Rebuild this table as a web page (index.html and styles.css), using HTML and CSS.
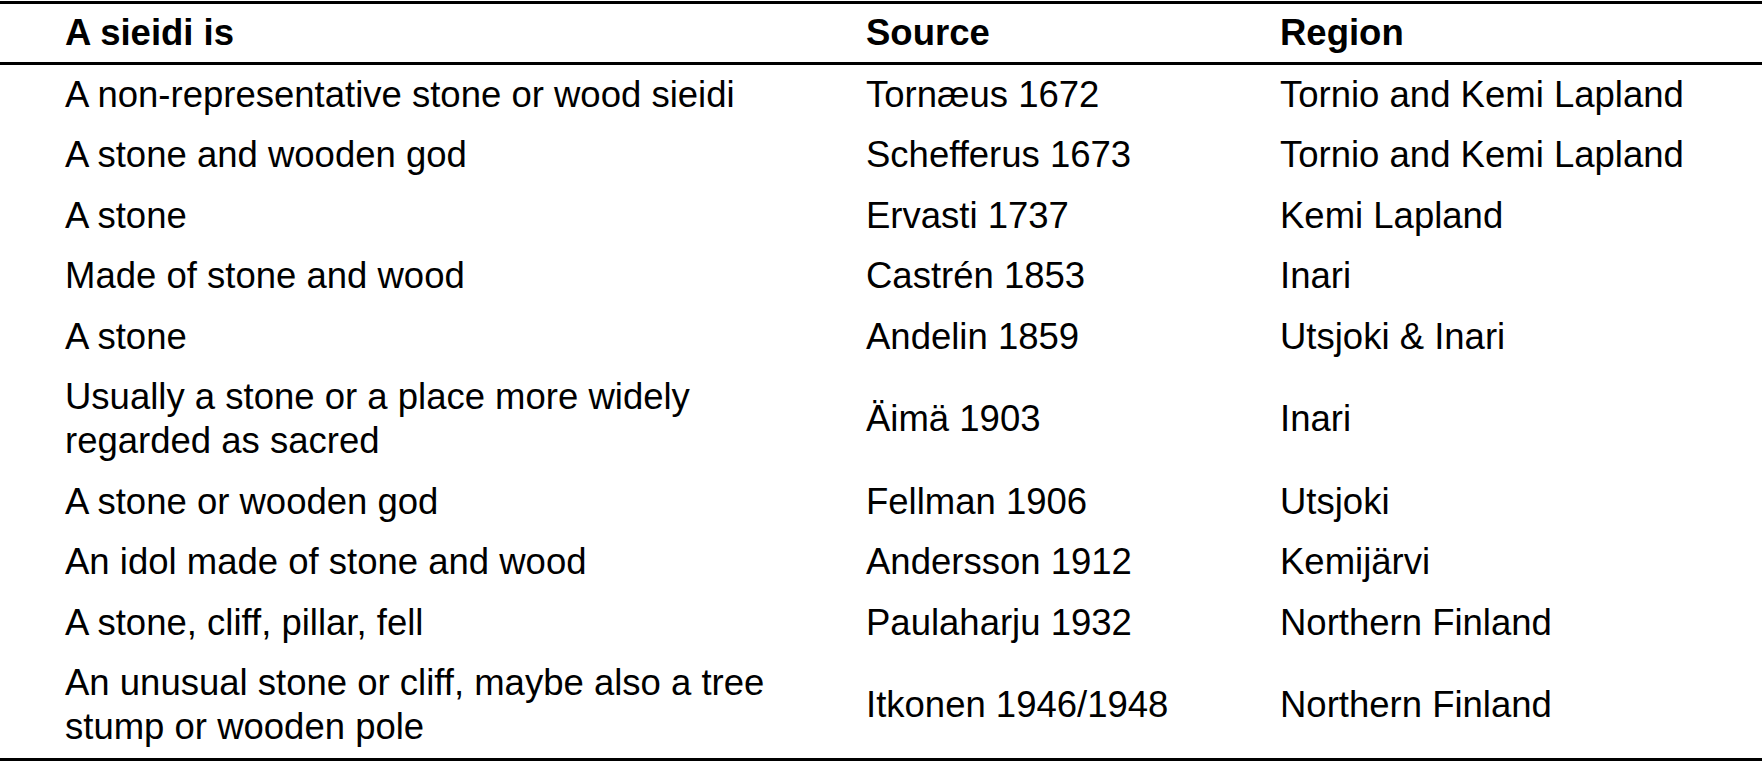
FILE: index.html
```html
<!DOCTYPE html>
<html lang="en">
<head>
<meta charset="utf-8">
<title>Sieidi definitions</title>
<link rel="stylesheet" href="styles.css">
</head>
<body>
<div class="page">
<table class="sieidi">
  <colgroup>
    <col class="c1">
    <col class="c2">
    <col class="c3">
  </colgroup>
  <thead>
    <tr><th>A sieidi is</th><th>Source</th><th>Region</th></tr>
  </thead>
  <tbody>
    <tr><td>A non-representative stone or wood sieidi</td><td>Tornæus 1672</td><td>Tornio and Kemi Lapland</td></tr>
    <tr><td>A stone and wooden god</td><td>Schefferus 1673</td><td>Tornio and Kemi Lapland</td></tr>
    <tr><td>A stone</td><td>Ervasti 1737</td><td>Kemi Lapland</td></tr>
    <tr><td>Made of stone and wood</td><td>Castrén 1853</td><td>Inari</td></tr>
    <tr><td>A stone</td><td>Andelin 1859</td><td>Utsjoki &amp; Inari</td></tr>
    <tr><td>Usually a stone or a place more widely regarded as sacred</td><td>Äimä 1903</td><td>Inari</td></tr>
    <tr><td>A stone or wooden god</td><td>Fellman 1906</td><td>Utsjoki</td></tr>
    <tr><td>An idol made of stone and wood</td><td>Andersson 1912</td><td>Kemijärvi</td></tr>
    <tr><td>A stone, cliff, pillar, fell</td><td>Paulaharju 1932</td><td>Northern Finland</td></tr>
    <tr><td>An unusual stone or cliff, maybe also a tree stump or wooden pole</td><td>Itkonen 1946/1948</td><td>Northern Finland</td></tr>
  </tbody>
</table>
</div>
</body>
</html>
```

FILE: styles.css
```css
html, body {
  margin: 0;
  padding: 0;
  background: #ffffff;
}

.page {
  padding-top: 1px;
}

.sieidi {
  width: 100%;
  border-collapse: collapse;
  table-layout: fixed;
  font-family: "Liberation Sans", Arial, sans-serif;
  font-size: 36.5px;
  line-height: 44px;
  color: #000000;
  border-top: 3px solid #000000;
  border-bottom: 3px solid #000000;
}

.c1 { width: 866px; }
.c2 { width: 414px; }

.sieidi th,
.sieidi td {
  text-align: left;
  vertical-align: middle;
  padding: 7.8px 0 8.7px 0;
}

.sieidi th {
  font-weight: bold;
  padding-top: 7.3px;
  padding-bottom: 6.7px;
  border-bottom: 3px solid #000000;
}

.sieidi th:first-child,
.sieidi td:first-child {
  padding-left: 65px;
  padding-right: 40px;
}
```
